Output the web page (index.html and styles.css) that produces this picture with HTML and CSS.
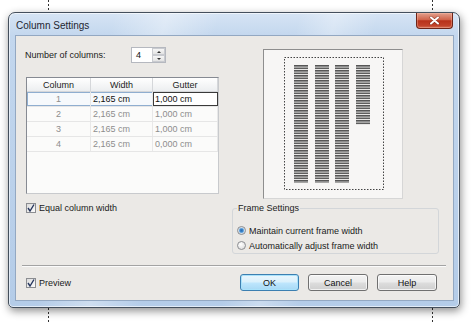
FILE: index.html
```html
<!DOCTYPE html>
<html lang="en">
<head>
<meta charset="UTF-8">
<meta name="viewport" content="width=device-width, initial-scale=1.0">
<title>Column Settings</title>
<link rel="stylesheet" href="styles.css">
</head>
<body>
<div class="window">
    <div class="titlebar">
        <span class="title">Column Settings</span>
        <button class="close" aria-label="Close">
            <svg width="11" height="9" viewBox="0 0 11 9"><path d="M2 1.5 L9 7.5 M9 1.5 L2 7.5" stroke="#5a1a10" stroke-width="3" stroke-linecap="round" opacity="0.5"/><path d="M2 1.5 L9 7.5 M9 1.5 L2 7.5" stroke="#fff" stroke-width="2" stroke-linecap="round"/></svg>
        </button>
    </div>
    <div class="client">
        <div class="main">
            <div class="left">
                <div class="count-row">
                    <span class="count-label">Number of columns:</span>
                    <div class="spinner">
                        <span class="spin-value">4</span>
                        <div class="spin-btns">
                            <span class="spin-btn"><i class="arrow up"></i></span>
                            <span class="spin-btn"><i class="arrow down"></i></span>
                        </div>
                    </div>
                </div>
                <div class="list">
                    <div class="row head">
                        <span class="cell c1">Column</span>
                        <span class="cell c2 center">Width</span>
                        <span class="cell c3 center">Gutter</span>
                    </div>
                    <div class="row sel">
                        <span class="cell c1">1</span>
                        <span class="cell c2 dark">2,165 cm</span>
                        <span class="cell c3 edit">1,000 cm</span>
                    </div>
                    <div class="row">
                        <span class="cell c1">2</span>
                        <span class="cell c2">2,165 cm</span>
                        <span class="cell c3">1,000 cm</span>
                    </div>
                    <div class="row">
                        <span class="cell c1">3</span>
                        <span class="cell c2">2,165 cm</span>
                        <span class="cell c3">1,000 cm</span>
                    </div>
                    <div class="row">
                        <span class="cell c1">4</span>
                        <span class="cell c2">2,165 cm</span>
                        <span class="cell c3">0,000 cm</span>
                    </div>
                </div>
                <label class="check-row equal">
                    <span class="checkbox"><svg width="8" height="8" viewBox="0 0 8 8"><path d="M1 4 L3 7 L7 0.5" fill="none" stroke="#26365e" stroke-width="1.4"/></svg></span>
                    <span>Equal column width</span>
                </label>
            </div>
            <div class="right">
                <div class="preview">
                    <svg width="138" height="148" viewBox="0 0 138 148">
                        <defs>
                            <pattern id="lines" width="14" height="2.5" patternUnits="userSpaceOnUse">
                                <rect width="14" height="1.6" fill="#555"/>
                            </pattern>
                        </defs>
                        <rect x="20.5" y="7.5" width="99" height="132" fill="none" stroke="#444" stroke-width="1" stroke-dasharray="1.5 1.5"/>
                        <rect x="30" y="15" width="14" height="118" fill="url(#lines)"/>
                        <rect x="51" y="15" width="14" height="118" fill="url(#lines)"/>
                        <rect x="71" y="15" width="14" height="118" fill="url(#lines)"/>
                        <rect x="92" y="15" width="14" height="60" fill="url(#lines)"/>
                    </svg>
                </div>
                <div class="group">
                    <span class="group-title">Frame Settings</span>
                    <div class="radios">
                        <label class="radio-row"><span class="radio on"></span><span>Maintain current frame width</span></label>
                        <label class="radio-row"><span class="radio"></span><span>Automatically adjust frame width</span></label>
                    </div>
                </div>
            </div>
        </div>
        <div class="separator"></div>
        <div class="footer">
            <label class="check-row">
                <span class="checkbox"><svg width="8" height="8" viewBox="0 0 8 8"><path d="M1 4 L3 7 L7 0.5" fill="none" stroke="#26365e" stroke-width="1.4"/></svg></span>
                <span>Preview</span>
            </label>
            <div class="buttons">
                <button class="btn default">OK</button>
                <button class="btn">Cancel</button>
                <button class="btn">Help</button>
            </div>
        </div>
    </div>
</div>
</body>
</html>
```
FILE: styles.css
```css
  body {
      margin: 0;
      padding: 12px 0 0 8px;
      width: 474px;
      height: 323px;
      box-sizing: border-box;
      overflow: hidden;
      font-family: "Liberation Sans", Arial, sans-serif;
      font-size: 9px;
      color: #1a1a1a;
      background-color: #fff;
      /* dotted guide lines behind the dialog */
      background-image:
          repeating-linear-gradient(to bottom, #333 0 2px, transparent 2px 4px),
          repeating-linear-gradient(to bottom, #333 0 2px, transparent 2px 4px);
      background-size: 1px 100%, 1px 100%;
      background-position: 48px 0, 432px 0;
      background-repeat: no-repeat;
  }
  .window {
      width: 452px;
      height: 296px;
      box-sizing: border-box;
      padding: 0 6px 7px 7px;
      border: 1px solid #444f5c;
      border-radius: 7px 7px 5px 5px;
      background:
          linear-gradient(105deg, rgba(255,255,255,0) 20%, rgba(255,255,255,0.35) 30%, rgba(255,255,255,0) 40%, rgba(255,255,255,0) 55%, rgba(255,255,255,0.3) 62%, rgba(255,255,255,0) 70%),
          linear-gradient(to bottom, #d6e4f4 0, #c3d7ee 23px, #b4cce8 100%);
      box-shadow: 1px 3px 8px rgba(0, 0, 0, 0.45), inset 0 0 0 1px rgba(255, 255, 255, 0.6);
  }
  .titlebar {
      display: flex;
      align-items: flex-start;
      height: 23px;
  }
  .title {
      margin-top: 7px;
      font-size: 10px;
      color: #1e2630;
  }
  .close {
      margin-left: auto;
      width: 37px;
      height: 16px;
      padding: 0;
      display: flex;
      align-items: center;
      justify-content: center;
      border: 1px solid #6e2417;
      border-top: none;
      border-radius: 0 0 4px 4px;
      background: linear-gradient(to bottom, #e3a08d 0, #d0634a 45%, #b8311a 52%, #c2432a 85%, #d5735a 100%);
      box-shadow: inset 0 0 0 1px rgba(255, 200, 180, 0.35);
  }
  .client {
      width: 437px;
      height: 264px;
      background: #ebe9e6;
      box-shadow: 0 0 0 1px #93a8c2;
  }
  .main {
      display: flex;
      height: 229px;
  }
  .left {
      width: 216px;
      padding-left: 9px;
      box-sizing: border-box;
  }
  .count-row {
      display: flex;
      align-items: center;
      height: 16px;
      margin-top: 11px;
  }
  .count-label {
      width: 106px;
  }
  .spinner {
      display: flex;
      width: 35px;
      height: 16px;
      box-sizing: border-box;
      border: 1px solid #b5b8bf;
      background: #fff;
  }
  .spin-value {
      padding: 2px 0 0 4px;
      color: #111;
  }
  .spin-btns {
      margin-left: auto;
      width: 13px;
      display: flex;
      flex-direction: column;
  }
  .spin-btn {
      flex: 1;
      display: flex;
      align-items: center;
      justify-content: center;
      border: 1px solid #c9cbd0;
      background: linear-gradient(to bottom, #f6f6f6, #e3e3e3);
  }
  .arrow {
      width: 0;
      height: 0;
      border-left: 2px solid transparent;
      border-right: 2px solid transparent;
  }
  .arrow.up {
      border-bottom: 2px solid #333;
  }
  .arrow.down {
      border-top: 2px solid #333;
  }
  .list {
      width: 193px;
      height: 117px;
      margin: 14px 0 0 1px;
      box-sizing: border-box;
      border: 1px solid #868a92;
      border-bottom-color: #c8cacd;
      border-right-color: #c8cacd;
      background: #fbfbfa;
  }
  .row {
      display: flex;
      height: 15px;
      box-sizing: border-box;
      border-bottom: 1px solid #e6e6e6;
      color: #8d8d8d;
  }
  .row.head {
      height: 14px;
      color: #222;
      border-bottom-color: #d5d7da;
      background: linear-gradient(to bottom, #fff 0, #f4f5f6 60%, #eceef0 100%);
  }
  .row.sel {
      background: #f6f9fc;
      box-shadow: inset 0 0 0 1px #8faed0;
  }
  .cell {
      display: flex;
      align-items: center;
      box-sizing: border-box;
      padding-left: 2px;
      border-right: 1px solid #e8e8e8;
  }
  .head .cell {
      border-right-color: #d5d7da;
  }
  .c1 {
      width: 64px;
      justify-content: center;
      padding-left: 0;
  }
  .c2 {
      width: 62px;
  }
  .c3 {
      width: 65px;
  }
  .center {
      justify-content: center;
      padding-left: 0;
  }
  .dark {
      color: #111;
  }
  .edit {
      color: #111;
      background: #fff;
      border: 1px solid #3a3a3a;
      padding-left: 1px;
  }
  .check-row {
      display: flex;
      align-items: center;
      gap: 3px;
      height: 10px;
  }
  .equal {
      margin: 9px 0 0 1px;
  }
  .checkbox {
      width: 10px;
      height: 10px;
      box-sizing: border-box;
      display: flex;
      align-items: center;
      justify-content: center;
      border: 1px solid #8b8d91;
      background: linear-gradient(135deg, #dcdcdc, #fbfbfb);
  }
  .right {
      flex: 1;
  }
  .preview {
      width: 140px;
      height: 150px;
      margin: 13px 0 0 31px;
      box-sizing: border-box;
      border: 1px solid #8e8e8e;
      border-right-color: #d6d6d6;
      border-bottom-color: #d6d6d6;
      background: #f7f6f5;
  }
  .preview svg {
      display: block;
  }
  .group {
      width: 207px;
      height: 46px;
      margin-top: 9px;
      box-sizing: border-box;
      border: 1px solid #d3d6d9;
      border-radius: 3px;
      padding-left: 4px;
  }
  .group-title {
      display: inline-block;
      margin-top: -6px;
      padding: 0 1px;
      line-height: 11px;
      background: #ebe9e6;
      color: #222;
      vertical-align: top;
  }
  .radios {
      margin-top: 4px;
  }
  .radio-row {
      display: flex;
      align-items: center;
      gap: 3px;
      height: 15px;
  }
  .radio {
      width: 9px;
      height: 9px;
      box-sizing: border-box;
      border-radius: 50%;
      border: 1px solid #8b8d91;
      background: radial-gradient(circle at 40% 35%, #fff, #d6d6d6);
  }
  .radio.on {
      background: radial-gradient(circle, #2c6fb3 0, #3c86cc 1.5px, #9cc6ea 2.6px, #e8e8e8 3.2px, #d6d6d6 100%);
  }
  .separator {
      margin: 0 7px 0 6px;
      border-top: 1px solid #a3a3a3;
      border-bottom: 1px solid #fbfbfb;
  }
  .footer {
      display: flex;
      align-items: center;
      height: 17px;
      margin-top: 7px;
      padding: 0 16px 0 10px;
  }
  .buttons {
      display: flex;
      gap: 9px;
      margin-left: auto;
  }
  .btn {
      width: 60px;
      height: 17px;
      padding: 0;
      font-family: inherit;
      font-size: 9px;
      color: #111;
      border: 1px solid #707070;
      border-radius: 3px;
      background: linear-gradient(to bottom, #f3f3f3 0, #ebebeb 48%, #dddddd 52%, #cfcfcf 100%);
      box-shadow: inset 0 0 0 1px rgba(255, 255, 255, 0.7);
  }
  .btn.default {
      width: 59px;
      border-color: #3c7fb1;
      background: linear-gradient(to bottom, #eaf6fd 0, #d9f0fc 48%, #bee6fd 52%, #a7d9f5 100%);
      box-shadow: inset 0 0 0 1px #a9e2fb;
  }
```
